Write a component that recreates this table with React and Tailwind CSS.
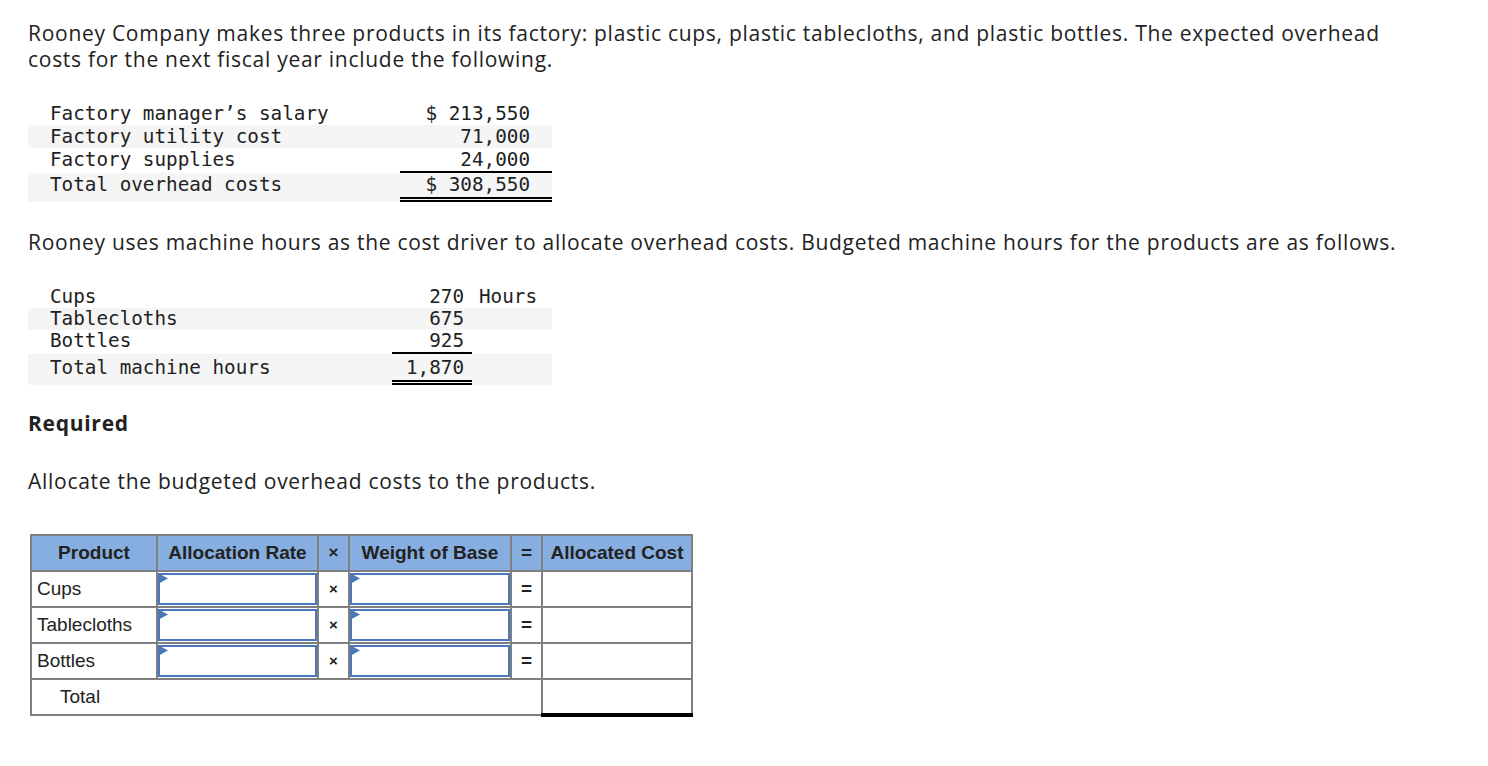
import React from 'react';

const overhead = [
  { label: 'Factory manager’s salary', value: '$ 213,550' },
  { label: 'Factory utility cost', value: '71,000' },
  { label: 'Factory supplies', value: '24,000', under: true },
  { label: 'Total overhead costs', value: '$ 308,550', total: true },
];

const hours = [
  { label: 'Cups', value: '270', unit: 'Hours' },
  { label: 'Tablecloths', value: '675' },
  { label: 'Bottles', value: '925', under: true },
  { label: 'Total machine hours', value: '1,870', total: true },
];

const products = ['Cups', 'Tablecloths', 'Bottles'];

function InputCell() {
  return (
    <td className="border-2 border-[#808080] p-0 h-[36px]">
      <div className="relative h-[32px] border-2 border-[#4a78b8] bg-white">
        <svg className="absolute -left-[2px] -top-[2px]" width="10" height="11" viewBox="0 0 10 11">
          <polygon points="0,0 10,5.5 0,11" fill="#4a78b8" />
        </svg>
      </div>
    </td>
  );
}

function OverheadTable() {
  return (
    <div className="w-[524px] mt-[30px] font-['DejaVu_Sans_Mono',monospace] text-[19.3px] tracking-normal text-[#222] leading-[23px]">
      {overhead.map((row, idx) => (
        <div key={idx} className={`flex ${idx % 2 === 1 ? 'bg-[#f5f5f5]' : ''}`}>
          <div className="w-[372px] pl-[22px]">{row.label}</div>
          <div className="w-[152px]">
            <div
              className={`text-right pr-[22px] whitespace-pre ${row.total ? 'border-b-[5px] border-double border-black pb-[1px]' : ''} ${row.under ? 'border-b-2 border-black' : ''}`}
            >
              {row.value}
            </div>
          </div>
        </div>
      ))}
    </div>
  );
}

function HoursTable() {
  return (
    <div className="w-[524px] mt-[31px] font-['DejaVu_Sans_Mono',monospace] text-[19.3px] tracking-normal text-[#222] leading-[22px]">
      {hours.map((row, idx) => (
        <div key={idx} className={`flex ${idx % 2 === 1 ? 'bg-[#f5f5f5]' : ''} ${row.total ? 'pt-[3px]' : ''}`}>
          <div className="w-[364px] pl-[22px]">{row.label}</div>
          <div className="w-[80px]">
            <div
              className={`text-right pr-[8px] ${row.total ? 'border-b-[5px] border-double border-black pb-[1px]' : ''} ${row.under ? 'border-b-2 border-black' : ''}`}
            >
              {row.value}
            </div>
          </div>
          <div className="w-[80px] pl-[7px]">{row.unit}</div>
        </div>
      ))}
    </div>
  );
}

export default function App() {
  return (
    <div className="bg-white min-h-screen px-[28px] pt-[20px] text-[#222] font-['Open_Sans','Noto_Sans',sans-serif] text-[21px] tracking-[0.72px]">
      <p className="w-[1400px] leading-[26px]">
        Rooney Company makes three products in its factory: plastic cups, plastic tablecloths, and plastic bottles. The expected overhead costs for the next fiscal year include the following.
      </p>

      <OverheadTable />

      <p className="mt-[27px] leading-[26px]">
        Rooney uses machine hours as the cost driver to allocate overhead costs. Budgeted machine hours for the products are as follows.
      </p>

      <HoursTable />

      <p className="mt-[25px] font-bold leading-[26px]">Required</p>

      <p className="mt-[32px] leading-[26px]">Allocate the budgeted overhead costs to the products.</p>

      <table className="mt-[40px] ml-[2px] border-collapse border-2 border-[#808080] font-['Liberation_Sans',Arial,sans-serif] text-[19px] tracking-normal text-[#222]">
        <thead>
          <tr className="bg-[#87aee0] h-[36px] font-bold">
            <th className="border-2 border-[#808080] w-[126px] px-1">Product</th>
            <th className="border-2 border-[#808080] w-[161px] px-1 whitespace-nowrap">Allocation Rate</th>
            <th className="border-2 border-[#808080] w-[31px] text-[17px]">×</th>
            <th className="border-2 border-[#808080] w-[162px] px-1 whitespace-nowrap">Weight of Base</th>
            <th className="border-2 border-[#808080] w-[31px]">=</th>
            <th className="border-2 border-[#808080] w-[150px] px-1 whitespace-nowrap">Allocated Cost</th>
          </tr>
        </thead>
        <tbody>
          {products.map((p) => (
            <tr key={p} className="h-[36px]">
              <td className="border-2 border-[#808080] pl-[5px]">{p}</td>
              <InputCell />
              <td className="border-2 border-[#808080] text-center text-[15px] font-bold">×</td>
              <InputCell />
              <td className="border-2 border-[#808080] text-center font-bold">=</td>
              <td className="border-2 border-[#808080]"></td>
            </tr>
          ))}
          <tr className="h-[36px]">
            <td colSpan={5} className="border-2 border-[#808080] pl-[28px]">Total</td>
            <td className="border-2 border-[#808080] border-t-black border-b-[4px] border-b-black"></td>
          </tr>
        </tbody>
      </table>
    </div>
  );
}
